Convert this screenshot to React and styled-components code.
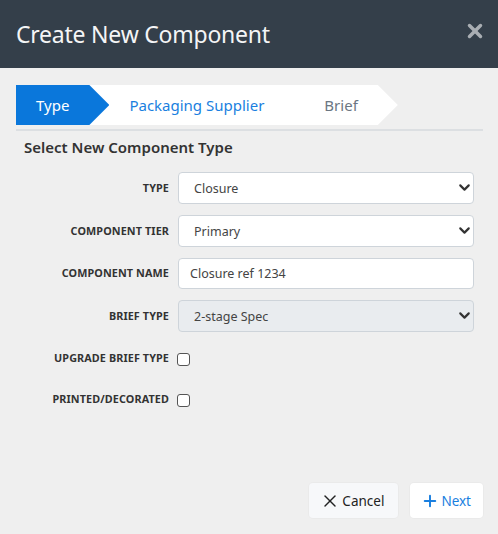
import React from 'react'
import styled, { createGlobalStyle } from 'styled-components'
import { ChevronDown, X, Plus } from 'lucide-react'

const Global = createGlobalStyle`
	html, body {
		margin: 0;
		padding: 0;
		background: #efefef;
	}
	body {
		font-family: "Noto Sans", "Open Sans", sans-serif;
		color: #333;
	}
`

const Modal = styled.div`
	display: flex;
	flex-direction: column;
	height: 534px;
	width: 498px;
	background: #efefef;
`
const Header = styled.div`
	display: flex;
	align-items: center;
	justify-content: space-between;
	height: 68px;
	padding: 0 12px 0 16px;
	background: #343f4a;
	box-sizing: border-box;
`
const Title = styled.h1`
	margin: 0;
	font-size: 23px;
	font-weight: 400;
	color: #f4f5f6;
	letter-spacing: -0.01em;
`
const Close = styled.button`
	border: 0;
	background: none;
	padding: 0;
	display: flex;
	color: #a9aeb3;
	margin-top: -6px;
`
const Body = styled.div`
	flex: 1;
	display: flex;
	flex-direction: column;
	padding: 17px 15px 0 16px;
`
const Steps = styled.div`
	padding-bottom: 4px;
	border-bottom: 2px solid #dcdfe2;
`
const Track = styled.div`
	display: inline-flex;
	height: 40px;
	padding-right: 20px;
	background: #fff;
	clip-path: polygon(0 0, calc(100% - 20px) 0, 100% 50%, calc(100% - 20px) 100%, 0 100%);
`
const Step = styled.div`
	line-height: 40px;
	font-size: 15px;
	padding: ${p => (p.$active ? '0 40px 0 20px' : '0 20px')};
	margin-left: ${p => (p.$spaced ? '20px' : '0')};
	color: ${p => (p.$active ? '#fff' : p.$done ? '#1a7fe0' : '#6b7682')};
	background: ${p => (p.$active ? '#0a77db' : 'transparent')};
	clip-path: ${p =>
		p.$active
			? 'polygon(0 0, calc(100% - 20px) 0, 100% 50%, calc(100% - 20px) 100%, 0 100%)'
			: 'none'};
`
const Section = styled.h2`
	margin: 6px 0 0 8px;
	font-size: 15px;
	font-weight: 600;
	color: #333;
`
const Form = styled.div`
	display: grid;
	grid-template-columns: 145px 296px;
	column-gap: 9px;
	row-gap: 11px;
	margin: 15px 0 0 8px;
	align-items: center;
`
const Label = styled.label`
	text-align: right;
	font-size: 10.8px;
	font-weight: 700;
	letter-spacing: 0.01em;
	text-transform: uppercase;
	color: #333;
	white-space: nowrap;
	margin-top: -2px;
`
const SelectWrap = styled.div`
	position: relative;
	height: 32px;
`
const Select = styled.select`
	appearance: none;
	width: 100%;
	height: 100%;
	box-sizing: border-box;
	border: 1px solid #ced4da;
	border-radius: 4px;
	padding: 0 30px 0 15px;
	font-family: inherit;
	font-size: 12.5px;
	color: #444;
	background: ${p => (p.disabled ? '#e9ecef' : '#fff')};
	opacity: 1;
`
const Chevron = styled(ChevronDown)`
	position: absolute;
	right: 1px;
	top: 7px;
	color: #333;
	pointer-events: none;
`
const Input = styled.input`
	width: 100%;
	height: 31px;
	box-sizing: border-box;
	border: 1px solid #ced4da;
	border-radius: 4px;
	padding: 0 11px;
	font-family: inherit;
	font-size: 12.5px;
	color: #444;
	background: #fff;
`
const CheckRow = styled.div`
	display: flex;
	align-items: center;
	height: 30px;
	padding-top: 2px;
	box-sizing: border-box;
`
const Check = styled.input`
	appearance: none;
	margin: 0 0 0 -1px;
	width: 13px;
	height: 13px;
	border: 1px solid #555;
	border-radius: 3px;
	background: #fff;
`
const Footer = styled.div`
	margin-top: auto;
	display: flex;
	justify-content: flex-end;
	gap: 12px;
	padding-bottom: 16px;
`
const Button = styled.button`
	display: flex;
	align-items: center;
	gap: 2px;
	height: 35px;
	padding: ${p => (p.$primary ? '0 12px 0 11px' : '0 14px 0 11px')};
	border: 0;
	border-radius: 4px;
	font-family: inherit;
	font-size: 13.5px;
	background: ${p => (p.$primary ? '#fff' : '#f7f8fa')};
	color: ${p => (p.$primary ? '#1a7fe0' : '#222')};
	box-shadow: 0 0 0 1px rgba(0, 0, 0, 0.02);
`

const App = () => (
	<Modal>
		<Global />
		<Header>
			<Title>Create New Component</Title>
			<Close>
				<X size={22} strokeWidth={3.8} />
			</Close>
		</Header>
		<Body>
			<Steps>
				<Track>
					<Step $active>Type</Step>
					<Step $done>Packaging Supplier</Step>
					<Step $spaced>Brief</Step>
				</Track>
			</Steps>
			<Section>Select New Component Type</Section>
			<Form>
				<Label>Type</Label>
				<SelectWrap>
					<Select defaultValue="Closure">
						<option>Closure</option>
					</Select>
					<Chevron size={17} strokeWidth={3} />
				</SelectWrap>
				<Label>Component Tier</Label>
				<SelectWrap>
					<Select defaultValue="Primary">
						<option>Primary</option>
					</Select>
					<Chevron size={17} strokeWidth={3} />
				</SelectWrap>
				<Label>Component Name</Label>
				<Input defaultValue="Closure ref 1234" />
				<Label>Brief Type</Label>
				<SelectWrap>
					<Select disabled defaultValue="2-stage Spec">
						<option>2-stage Spec</option>
					</Select>
					<Chevron size={17} strokeWidth={3} />
				</SelectWrap>
				<Label>Upgrade Brief Type</Label>
				<CheckRow>
					<Check type="checkbox" />
				</CheckRow>
				<Label>Printed/Decorated</Label>
				<CheckRow>
					<Check type="checkbox" />
				</CheckRow>
			</Form>
			<Footer>
				<Button>
					<X size={20} strokeWidth={1.7} />
					Cancel
				</Button>
				<Button $primary>
					<Plus size={18} strokeWidth={2.6} />
					Next
				</Button>
			</Footer>
		</Body>
	</Modal>
)

export default App
